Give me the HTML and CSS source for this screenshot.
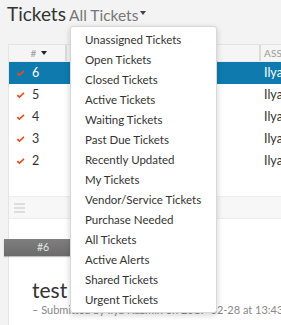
FILE: index.html
```html
<!DOCTYPE html>
<html>
<head>
<meta charset="utf-8">
<link rel="stylesheet" href="styles.css">
</head>
<body>
<div class="page">
  <div class="titlebar">
    <span class="title">Tickets</span>
    <span class="filter">All Tickets<span class="caret"></span></span>
  </div>
  <div class="panel">
    <div class="thead">
      <div class="c-num">#<span class="caret small"></span></div>
      <div class="c-mid"></div>
      <div class="c-assign">ASSIGNED</div>
    </div>
    <div class="row selected">
      <div class="c-num"><svg class="check" viewBox="0 0 10 8"><path d="M0.6 4.3 L2.2 2.9 L3.8 4.6 L8.4 0.4 L9.6 1.6 L3.8 7.2 Z"/></svg><span class="num">6</span></div>
      <div class="c-mid"></div>
      <div class="c-assign">Ilya</div>
    </div>
    <div class="row">
      <div class="c-num"><svg class="check" viewBox="0 0 10 8"><path d="M0.6 4.3 L2.2 2.9 L3.8 4.6 L8.4 0.4 L9.6 1.6 L3.8 7.2 Z"/></svg><span class="num">5</span></div>
      <div class="c-mid"></div>
      <div class="c-assign">Ilya</div>
    </div>
    <div class="row">
      <div class="c-num"><svg class="check" viewBox="0 0 10 8"><path d="M0.6 4.3 L2.2 2.9 L3.8 4.6 L8.4 0.4 L9.6 1.6 L3.8 7.2 Z"/></svg><span class="num">4</span></div>
      <div class="c-mid"></div>
      <div class="c-assign">Ilya</div>
    </div>
    <div class="row">
      <div class="c-num"><svg class="check" viewBox="0 0 10 8"><path d="M0.6 4.3 L2.2 2.9 L3.8 4.6 L8.4 0.4 L9.6 1.6 L3.8 7.2 Z"/></svg><span class="num">3</span></div>
      <div class="c-mid"></div>
      <div class="c-assign">Ilya</div>
    </div>
    <div class="row">
      <div class="c-num"><svg class="check" viewBox="0 0 10 8"><path d="M0.6 4.3 L2.2 2.9 L3.8 4.6 L8.4 0.4 L9.6 1.6 L3.8 7.2 Z"/></svg><span class="num">2</span></div>
      <div class="c-mid"></div>
      <div class="c-assign">Ilya</div>
    </div>
    <div class="tfoot">
      <span class="burger"><i></i><i></i><i></i></span>
    </div>
    <div class="detail">
      <div class="ribbon">#6</div>
      <div class="subject">test</div>
      <div class="meta">– Submitted by Ilya Kuzmin on 2017-02-28 at 13:43</div>
    </div>
  </div>

  <ul class="dropdown">
    <li>Unassigned Tickets</li>
    <li>Open Tickets</li>
    <li>Closed Tickets</li>
    <li>Active Tickets</li>
    <li>Waiting Tickets</li>
    <li>Past Due Tickets</li>
    <li>Recently Updated</li>
    <li>My Tickets</li>
    <li>Vendor/Service Tickets</li>
    <li>Purchase Needed</li>
    <li>All Tickets</li>
    <li>Active Alerts</li>
    <li>Shared Tickets</li>
    <li>Urgent Tickets</li>
  </ul>
</div>
</body>
</html>
```

FILE: styles.css
```css
html, body {
  margin: 0;
  padding: 0;
}
body {
  background: #f3f3f3;
  font-family: Lato, "Open Sans", sans-serif;
  color: #333;
  overflow: hidden;
}
.page {
  position: relative;
  width: 281px;
  height: 325px;
  overflow: hidden;
}
.titlebar {
  height: 44px;
  box-sizing: border-box;
  padding: 1px 0 0 7px;
  white-space: nowrap;
}
.title {
  font-size: 19px;
  color: #333;
  line-height: 26px;
}
.filter {
  font-size: 15.5px;
  color: #777;
  margin-left: -1px;
}
.caret {
  display: inline-block;
  width: 0;
  height: 0;
  border-left: 3.5px solid transparent;
  border-right: 3.5px solid transparent;
  border-top: 4px solid #444;
  vertical-align: 6px;
  margin-left: 2px;
}
.caret.small {
  border-top-color: #222;
  vertical-align: 2px;
  margin-left: 5px;
}
.panel {
  margin-left: 8px;
  background: #fff;
  border-left: 1px solid #e4e4e4;
  height: 281px;
  box-sizing: border-box;
}
.thead, .row {
  display: flex;
  white-space: nowrap;
}
.thead {
  height: 18px;
  box-sizing: border-box;
  background: #f5f5f5;
  border-top: 1px solid #e2e2e2;
  border-bottom: 1px solid #ececec;
  font-size: 10px;
  color: #999;
  line-height: 16px;
}
.thead .c-num {
  justify-content: center;
  padding-left: 4px;
  border-right: 2px solid #dcdcdc;
}
.thead .c-assign {
  border-left: 2px solid #dcdcdc;
  padding-left: 3px;
  letter-spacing: 0.2px;
}
.c-num {
  width: 58px;
  display: flex;
  align-items: center;
  box-sizing: border-box;
}
.c-mid {
  flex: 1;
}
.c-assign {
  width: 22px;
  overflow: hidden;
  box-sizing: border-box;
}
.row {
  height: 22px;
  line-height: 22px;
  font-size: 12.5px;
  color: #333;
}
.row .c-num {
  padding-left: 7px;
}
.row .c-assign {
  padding-left: 5px;
  width: 22px;
}
.row.selected {
  background: #0f7aae;
  color: #fff;
}
.check {
  width: 9px;
  height: 7px;
  fill: #ec4b1e;
}
.num {
  margin-left: 7px;
}
.tfoot {
  margin-top: 24px;
  height: 23px;
  box-sizing: border-box;
  background: #f7f7f7;
  border-top: 1px solid #ededed;
  border-bottom: 1px solid #ececec;
  display: flex;
  align-items: center;
  padding-left: 5px;
}
.burger {
  display: flex;
  flex-direction: column;
  gap: 2px;
}
.burger i {
  display: block;
  width: 11px;
  height: 2px;
  background: #dedede;
}
.detail {
  padding-top: 20px;
}
.ribbon {
  margin-left: -5px;
  width: 78px;
  height: 17px;
  box-sizing: border-box;
  background: linear-gradient(#7f7f7f, #6b6b6b);
  color: #e6e6e6;
  font-size: 10.5px;
  line-height: 17px;
  text-align: center;
  box-shadow: 0 1px 1px rgba(0,0,0,0.25);
}
.subject {
  margin-top: 22px;
  padding-left: 23px;
  font-size: 21px;
  line-height: 24px;
  color: #333;
}
.meta {
  padding-left: 23px;
  margin-top: 1px;
  font-size: 11px;
  line-height: 14px;
  color: #888;
  white-space: nowrap;
}
.dropdown {
  position: absolute;
  left: 70px;
  top: 26px;
  width: 147px;
  margin: 0;
  padding: 3px 0 2px;
  list-style: none;
  background: #fff;
  border: 1px solid #d8d8d8;
  border-radius: 3px;
  box-shadow: 0 2px 6px rgba(0,0,0,0.18);
  box-sizing: border-box;
}
.dropdown li {
  height: 20px;
  line-height: 20px;
  padding-left: 14px;
  font-size: 11.5px;
  color: #333;
  white-space: nowrap;
}
```
